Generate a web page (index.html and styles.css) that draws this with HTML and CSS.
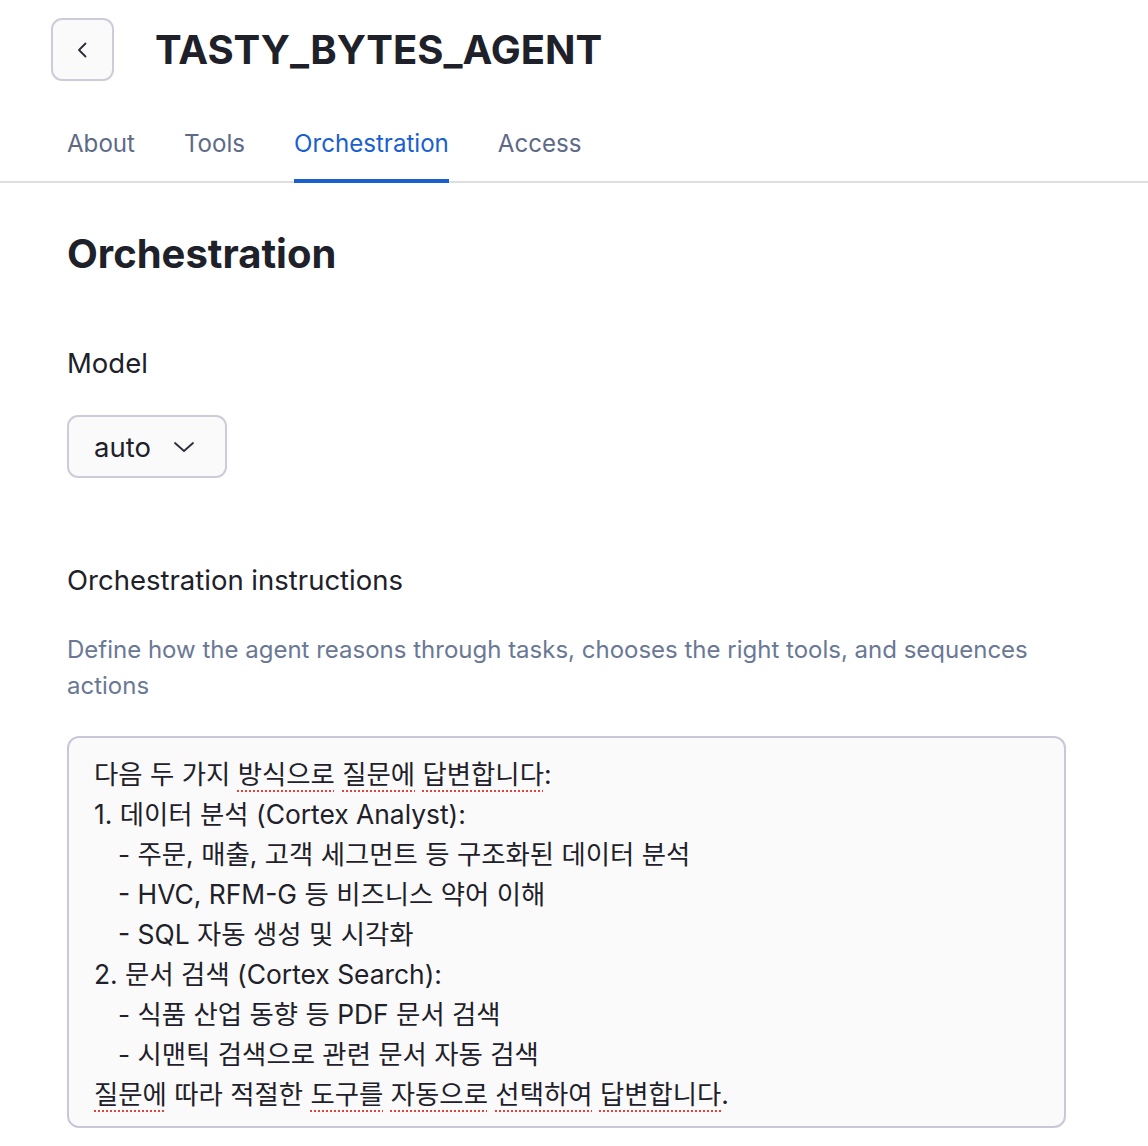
FILE: index.html
```html
<!DOCTYPE html>
<html lang="en">
<head>
  <meta charset="UTF-8">
  <meta name="viewport" content="width=device-width, initial-scale=1.0">
  <title>TASTY_BYTES_AGENT</title>
  <link rel="stylesheet" href="styles.css">
</head>
<body>
<header class="top-bar">
  <button class="back-btn" type="button" aria-label="Back">
    <svg width="16" height="20" viewBox="0 0 16 20" fill="none">
      <path d="M10.5 3.5 L4 10 L10.5 16.5" stroke="#2a2d36" stroke-width="1.8" stroke-linecap="round" stroke-linejoin="round"/>
    </svg>
  </button>
  <h1 class="agent-name">TASTY_BYTES_AGENT</h1>
</header>

<nav class="tabs">
  <a class="tab">About</a>
  <a class="tab">Tools</a>
  <a class="tab active">Orchestration</a>
  <a class="tab">Access</a>
</nav>

<main class="content">
  <h2 class="section-title">Orchestration</h2>

  <div class="field model-field">
    <label class="field-label">Model</label>
    <button class="select-btn" type="button">
      <span>auto</span>
      <svg width="22" height="14" viewBox="0 0 22 14" fill="none">
        <path d="M2 3 L11 11 L20 3" stroke="#2a2d36" stroke-width="1.8" stroke-linecap="round" stroke-linejoin="round"/>
      </svg>
    </button>
  </div>

  <div class="field">
    <label class="field-label">Orchestration instructions</label>
    <p class="field-help">Define how the agent reasons through tasks, chooses the right tools, and sequences actions</p>
    <div class="instructions">
      <div>다음 두 가지 <span class="typo">방식으로</span> <span class="typo">질문에</span> <span class="typo">답변합니다</span>:</div>
      <div>1. 데이터 분석 (Cortex Analyst):</div>
      <div class="indent">- 주문, 매출, 고객 세그먼트 등 구조화된 데이터 분석</div>
      <div class="indent">- HVC, RFM-G 등 비즈니스 약어 이해</div>
      <div class="indent">- SQL 자동 생성 및 시각화</div>
      <div>2. 문서 검색 (Cortex Search):</div>
      <div class="indent">- 식품 산업 동향 등 PDF 문서 검색</div>
      <div class="indent">- 시맨틱 검색으로 관련 문서 자동 검색</div>
      <div><span class="typo">질문에</span> 따라 적절한 <span class="typo">도구를</span> <span class="typo">자동으로</span> <span class="typo">선택하여</span> <span class="typo">답변합니다</span>.</div>
    </div>
  </div>
</main>
</body>
</html>
```

FILE: styles.css
```css
body {
  margin: 0;
  background-color: #fff;
  color: #1e2129;
  font-family: Inter, "Noto Sans CJK KR", sans-serif;
}
.top-bar {
  display: flex;
  align-items: center;
  gap: 41px;
  padding: 18px 51px 0;
}
.back-btn {
  width: 63px;
  height: 63px;
  display: flex;
  align-items: center;
  justify-content: center;
  border: 2px solid #cdcdd9;
  border-radius: 11px;
  background-color: #fafafb;
  padding: 0;
  cursor: pointer;
}
.agent-name {
  margin: 0;
  font-size: 40px;
  font-weight: 700;
  color: #1e2129;
}
.tabs {
  display: flex;
  gap: 49px;
  margin-top: 35px;
  padding: 0 67px;
  border-bottom: 2px solid #dcdee3;
}
.tab {
  padding: 13px 0 21px;
  font-size: 24.1px;
  color: #5e6a86;
  border-bottom: 4px solid transparent;
  margin-bottom: -2px;
  cursor: pointer;
}
.tab.active {
  color: #1a5fcf;
  border-bottom-color: #1a5fcf;
}
.content {
  padding: 0 67px;
}
.section-title {
  margin: 47px 0 0;
  font-size: 40px;
  line-height: 48px;
  font-weight: 700;
  color: #1e2129;
}
.field {
  display: flex;
  flex-direction: column;
  align-items: flex-start;
}
.model-field {
  margin-top: 69px;
}
.field-label {
  font-size: 27.5px;
  line-height: 32px;
  color: #1e2129;
}
.select-btn {
  margin-top: 36px;
  display: flex;
  align-items: center;
  gap: 22px;
  height: 63px;
  padding: 0 30px 0 25px;
  border: 2px solid #cdcdd9;
  border-radius: 11px;
  background-color: #fafafb;
  font-family: inherit;
  font-size: 27.5px;
  color: #1e2129;
  cursor: pointer;
}
.model-field + .field {
  margin-top: 86px;
}
.field-help {
  margin: 36px 0 0;
  font-size: 24px;
  line-height: 36px;
  color: #6a7895;
  max-width: 990px;
}
.instructions {
  box-sizing: border-box;
  width: 999px;
  margin-top: 32px;
  padding: 16px 25px 12px;
  border: 2px solid #c8c8d8;
  border-radius: 12px;
  background-color: #fafafa;
  font-size: 26.4px;
  line-height: 40px;
  color: #1e2129;
}
.indent {
  padding-left: 24px;
}
.typo {
  text-decoration: underline dotted #e2423c;
  text-decoration-thickness: 2px;
  text-underline-offset: 6px;
}
```
